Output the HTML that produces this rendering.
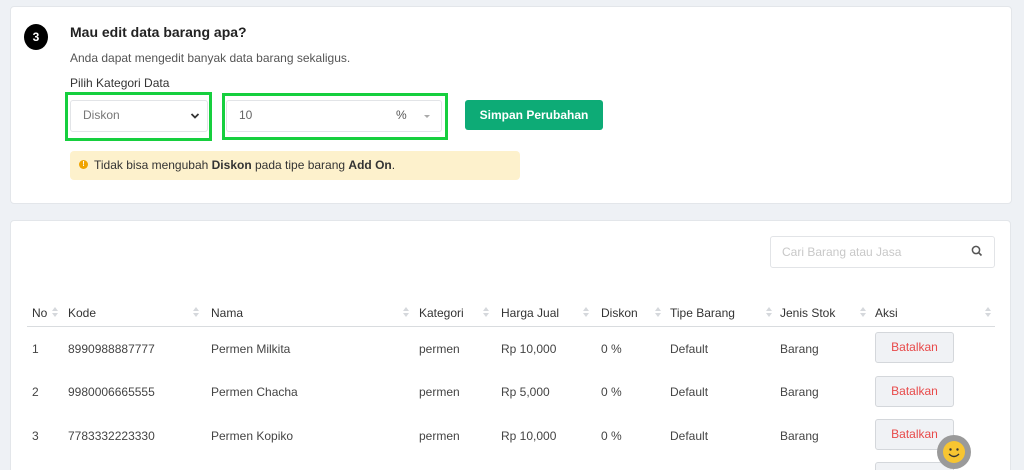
<!DOCTYPE html>
<html><head><meta charset="utf-8"><style>
*{box-sizing:border-box;margin:0;padding:0}
html,body{width:1024px;height:470px;overflow:hidden}
body{background:#eef1f5;font-family:"Liberation Sans",sans-serif;color:#333;font-size:12px}
#w{position:relative;width:1024px;height:470px;overflow:hidden}
.a{position:absolute}
.card{background:#fff;border:1px solid #e3e6ea;border-radius:4px}
.th{position:absolute;top:306px;font-size:12px;color:#333}
.s{position:absolute;top:307px;width:6px;height:12px}
.s:before,.s:after{content:"";position:absolute;left:0;border-left:3px solid transparent;border-right:3px solid transparent}
.s:before{top:0;border-bottom:4px solid #d5d8dc}
.s:after{top:6px;border-top:4px solid #d5d8dc}
.td{position:absolute;font-size:12px;color:#444}
.btn{position:absolute;left:875px;width:79px;height:31px;background:#f0f2f5;border:1px solid #d4d7db;border-radius:3px;color:#e84a4a;font-size:12px;text-align:center;line-height:29px}
</style></head><body><div id="w">
<div class="a card" style="left:10px;top:6px;width:1002px;height:198px"></div>
<div class="a" style="left:24px;top:24px;width:24px;height:26px;border-radius:50%;background:#000;color:#fff;font-weight:bold;font-size:12px;text-align:center;line-height:26px">3</div>
<div class="a" style="left:70px;top:24px;font-size:14px;font-weight:bold;color:#222">Mau edit data barang apa?</div>
<div class="a" style="left:70px;top:51px;font-size:12px;color:#555">Anda dapat mengedit banyak data barang sekaligus.</div>
<div class="a" style="left:70px;top:76px;font-size:12px;color:#333">Pilih Kategori Data</div>
<div class="a" style="left:65px;top:92px;width:147px;height:49px;border:3px solid #16cf3e"></div>
<div class="a" style="left:70px;top:100px;width:138px;height:32px;border:1px solid #e2e4e7;border-radius:3px;background:#fff"></div>
<div class="a" style="left:83px;top:108px;color:#777;font-size:12px">Diskon</div>
<svg class="a" style="left:190px;top:112px" width="10" height="8" viewBox="0 0 10 8"><path d="M1.5 2 L5 5.5 L8.5 2" fill="none" stroke="#333" stroke-width="1.8"/></svg>
<div class="a" style="left:222px;top:93px;width:226px;height:47px;border:3px solid #16cf3e"></div>
<div class="a" style="left:226px;top:100px;width:186px;height:32px;border:1px solid #e2e4e7;border-right:none;border-radius:3px 0 0 3px;background:#fff"></div>
<div class="a" style="left:412px;top:100px;width:30px;height:32px;border:1px solid #e2e4e7;border-left:none;border-radius:0 3px 3px 0;background:#fff"></div>
<div class="a" style="left:239px;top:108px;color:#666">10</div>
<div class="a" style="left:396px;top:108px;color:#555">%</div>
<div class="a" style="left:424px;top:115px;border-left:3px solid transparent;border-right:3px solid transparent;border-top:3px solid #aaa"></div>
<div class="a" style="left:465px;top:100px;width:138px;height:30px;background:#0dab76;border-radius:3px;color:#fff;font-weight:bold;font-size:12px;text-align:center;line-height:30px">Simpan Perubahan</div>
<div class="a" style="left:70px;top:151px;width:450px;height:29px;background:#fdf1cc;border-radius:4px"></div>
<div class="a" style="left:79px;top:160px;width:9px;height:9px;border-radius:50%;background:#f0a400;color:#fff;font-size:7px;font-weight:bold;text-align:center;line-height:9px">!</div>
<div class="a" style="left:94px;top:158px;font-size:12px;color:#333">Tidak bisa mengubah <b>Diskon</b> pada tipe barang <b>Add On</b>.</div>

<div class="a card" style="left:10px;top:220px;width:1001px;height:270px"></div>
<div class="a" style="left:770px;top:236px;width:225px;height:32px;border:1px solid #e2e4e7;border-radius:3px;background:#fff"></div>
<div class="a" style="left:782px;top:245px;color:#c8c8c8;font-size:12px">Cari Barang atau Jasa</div>
<svg class="a" style="left:971px;top:245px" width="12" height="12" viewBox="0 0 12 12"><circle cx="5" cy="5" r="3.6" fill="none" stroke="#555" stroke-width="1.5"/><path d="M7.7 7.7 L10.5 10.5" stroke="#555" stroke-width="1.6"/></svg>

<div class="th" style="left:32px">No</div><div class="s" style="left:52px"></div>
<div class="th" style="left:68px">Kode</div><div class="s" style="left:193px"></div>
<div class="th" style="left:211px">Nama</div><div class="s" style="left:403px"></div>
<div class="th" style="left:419px">Kategori</div><div class="s" style="left:483px"></div>
<div class="th" style="left:501px">Harga Jual</div><div class="s" style="left:583px"></div>
<div class="th" style="left:601px">Diskon</div><div class="s" style="left:655px"></div>
<div class="th" style="left:670px">Tipe Barang</div><div class="s" style="left:766px"></div>
<div class="th" style="left:780px">Jenis Stok</div><div class="s" style="left:860px"></div>
<div class="th" style="left:875px">Aksi</div><div class="s" style="left:985px"></div>
<div class="a" style="left:27px;top:326px;width:968px;height:1px;background:#d9dcdf"></div>

<div class="td" style="left:32px;top:342px">1</div><div class="td" style="left:68px;top:342px">8990988887777</div><div class="td" style="left:211px;top:342px">Permen Milkita</div><div class="td" style="left:419px;top:342px">permen</div><div class="td" style="left:501px;top:342px">Rp 10,000</div><div class="td" style="left:601px;top:342px">0 %</div><div class="td" style="left:670px;top:342px">Default</div><div class="td" style="left:780px;top:342px">Barang</div>
<div class="btn" style="top:332px">Batalkan</div>
<div class="td" style="left:32px;top:385px">2</div><div class="td" style="left:68px;top:385px">9980006665555</div><div class="td" style="left:211px;top:385px">Permen Chacha</div><div class="td" style="left:419px;top:385px">permen</div><div class="td" style="left:501px;top:385px">Rp 5,000</div><div class="td" style="left:601px;top:385px">0 %</div><div class="td" style="left:670px;top:385px">Default</div><div class="td" style="left:780px;top:385px">Barang</div>
<div class="btn" style="top:376px">Batalkan</div>
<div class="td" style="left:32px;top:429px">3</div><div class="td" style="left:68px;top:429px">7783332223330</div><div class="td" style="left:211px;top:429px">Permen Kopiko</div><div class="td" style="left:419px;top:429px">permen</div><div class="td" style="left:501px;top:429px">Rp 10,000</div><div class="td" style="left:601px;top:429px">0 %</div><div class="td" style="left:670px;top:429px">Default</div><div class="td" style="left:780px;top:429px">Barang</div>
<div class="btn" style="top:419px">Batalkan</div>
<div class="btn" style="top:462px"></div>
<div class="a" style="left:937px;top:435px;width:34px;height:34px;border-radius:50%;background:#9a9a9a"></div>
<svg class="a" style="left:942px;top:440px" width="24" height="24" viewBox="0 0 24 24"><circle cx="12" cy="12" r="11" fill="#f7c531"/><circle cx="8.5" cy="9.5" r="1.2" fill="#333"/><circle cx="15.5" cy="9.5" r="1.2" fill="#333"/><path d="M7 14 Q12 19 17 14" fill="none" stroke="#333" stroke-width="1.3"/></svg>
</div></body></html>
